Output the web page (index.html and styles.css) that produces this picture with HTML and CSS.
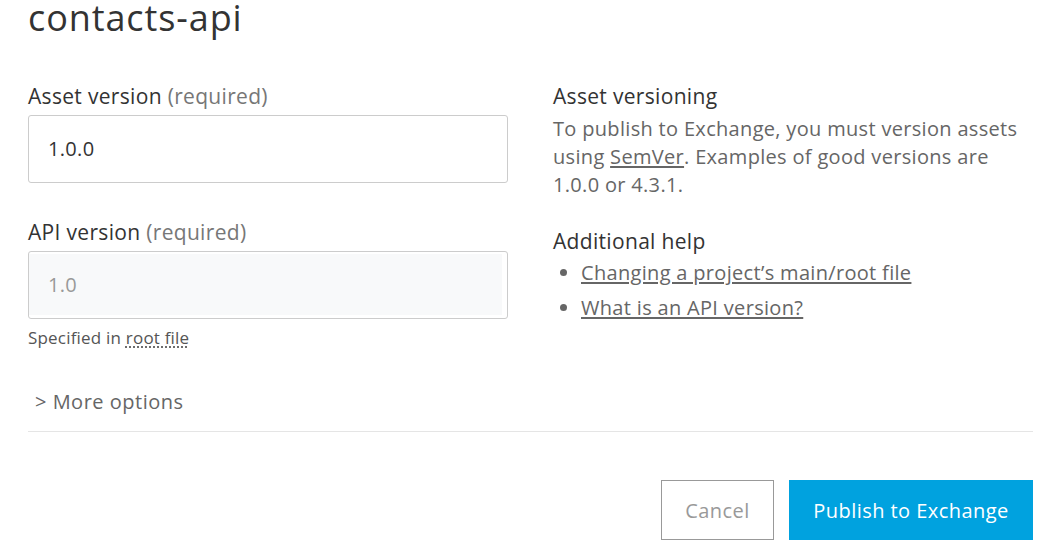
FILE: index.html
```html
<!DOCTYPE html>
<html lang="en">
<head>
<meta charset="utf-8">
<title>Publish to Exchange</title>
<link rel="stylesheet" href="styles.css">
</head>
<body>
<div class="page">
  <h1 class="title">contacts-api</h1>
  <div class="columns">
    <div class="form">
      <div class="field">
        <label class="label">Asset version <span class="req">(required)</span></label>
        <div class="input">1.0.0</div>
      </div>
      <div class="field">
        <label class="label">API version <span class="req">(required)</span></label>
        <div class="input disabled"><div class="disabled-inner">1.0</div></div>
        <div class="hint">Specified in <span class="dotted">root file</span></div>
      </div>
      <div class="more">&gt; More options</div>
    </div>
    <div class="help">
      <h2 class="help-title">Asset versioning</h2>
      <p class="help-text">To publish to Exchange, you must version assets using <a class="link">SemVer</a>. Examples of good versions are 1.0.0 or 4.3.1.</p>
      <h2 class="help-title second">Additional help</h2>
      <ul class="help-list">
        <li><a class="link">Changing a project’s main/root file</a></li>
        <li><a class="link">What is an API version?</a></li>
      </ul>
    </div>
  </div>
  <div class="divider"></div>
  <div class="actions">
    <button class="btn cancel">Cancel</button>
    <button class="btn primary">Publish to Exchange</button>
  </div>
</div>
</body>
</html>
```
FILE: styles.css
```css
html, body {
  margin: 0;
  padding: 0;
  background: #fff;
}
body {
  font-family: "Open Sans", "Liberation Sans", sans-serif;
  color: #333;
  letter-spacing: 0.02em;
}
.page {
  padding: 0 17px 0 28px;
}
.title {
  margin: 0;
  font-size: 36px;
  font-weight: 400;
  line-height: 36px;
  color: #333;
  letter-spacing: 0.9px;
}
.columns {
  display: flex;
  gap: 45px;
  margin-top: 46px;
}
.form {
  width: 480px;
  flex: none;
}
.field {
  margin-bottom: 35px;
}
.label {
  display: block;
  font-size: 21px;
  line-height: 28px;
  color: #333;
  margin-bottom: 5px;
}
.req {
  color: #777;
}
.input {
  box-sizing: border-box;
  height: 68px;
  border: 1px solid #ccc;
  border-radius: 3px;
  padding: 0 19px;
  font-size: 20px;
  line-height: 66px;
  color: #333;
}
.input.disabled {
  padding: 2px 5px 3px 0;
  line-height: normal;
}
.disabled-inner {
  height: 100%;
  background: #f8f9fa;
  padding: 0 19px;
  line-height: 61px;
  color: #999;
}
.hint {
  margin-top: 8px;
  font-size: 17px;
  line-height: 22px;
  color: #555;
  letter-spacing: 0.2px;
}
.dotted {
  text-decoration: underline dotted;
  text-underline-offset: 3px;
}
.more {
  padding-top: 4px;
  padding-left: 7px;
  font-size: 20px;
  line-height: 28px;
  color: #666;
  letter-spacing: 0.5px;
}
.help {
  flex: 1;
}
.help-title {
  margin: 0;
  font-size: 21px;
  font-weight: 400;
  line-height: 28px;
  color: #333;
}
.help-title.second {
  margin-top: 28px;
}
.help-text {
  margin: 5px 0 0;
  font-size: 20px;
  line-height: 28px;
  color: #666;
}
.link {
  color: #666;
  text-decoration: underline;
  text-underline-offset: 2px;
}
.help-list {
  margin: 0;
  padding-left: 28px;
  font-size: 20px;
  line-height: 35px;
  color: #666;
}
.divider {
  height: 1px;
  background: #e5e5e5;
  margin-top: 15px;
}
.actions {
  display: flex;
  justify-content: flex-end;
  gap: 15px;
  margin-top: 48px;
}
.btn {
  height: 60px;
  font-family: "Open Sans", "Liberation Sans", sans-serif;
  font-size: 20px;
  letter-spacing: 0.45px;
  border-radius: 0;
  cursor: pointer;
}
.cancel {
  width: 113px;
  background: #fff;
  border: 1px solid #999;
  color: #999;
}
.primary {
  width: 244px;
  background: #00a2df;
  border: none;
  color: #fff;
}
```
